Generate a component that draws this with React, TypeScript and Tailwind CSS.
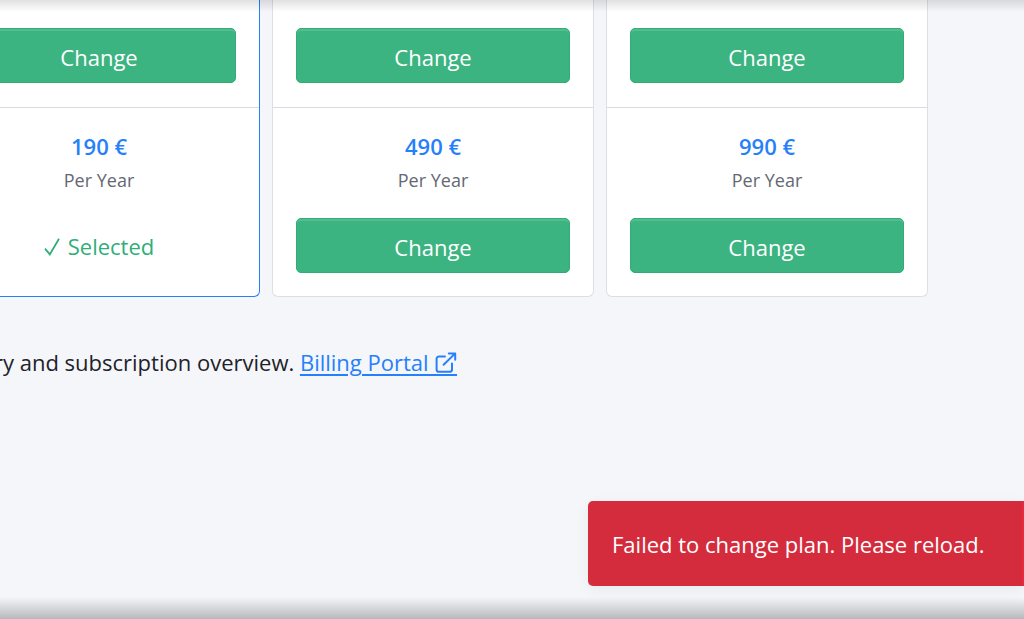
import React from 'react';

interface Plan {
  id: string;
  price: string;
  selected: boolean;
}

const PLANS: Plan[] = [
  { id: 'small', price: '190 €', selected: true },
  { id: 'medium', price: '490 €', selected: false },
  { id: 'large', price: '990 €', selected: false },
];

function ChangeButton() {
  return (
    <button
      type="button"
      className="flex h-[55px] w-full items-center justify-center rounded-[5px] border border-[#2fac77] bg-[#3cb481] pt-0.5 text-[22px] leading-8 text-white shadow-[inset_0_2px_0_rgba(255,255,255,0.12)]"
    >
      Change
    </button>
  );
}

// The last line continues the link's underline below the icon
function ExternalIcon() {
  return (
    <svg
      viewBox="0 0 24 24"
      className="inline-block h-6 w-6 align-[-5px]"
      fill="none"
      stroke="currentColor"
      strokeWidth="2"
      strokeLinecap="round"
      strokeLinejoin="round"
      aria-hidden="true"
    >
      <path d="M11 4.4H5a2.4 2.4 0 0 0-2.4 2.4v10.6A2.4 2.4 0 0 0 5 19.8h10.6a2.4 2.4 0 0 0 2.4-2.4V11.6" />
      <path d="M9.6 12.8 21 1.6M14.8 1.4h6.4v6.4" />
      <path d="M-1 23h24" strokeLinecap="butt" />
    </svg>
  );
}

function PlanCard({ plan }: { plan: Plan }) {
  const border = plan.selected ? 'border-[#2680fb]' : 'border-[#dcdfe5]';

  return (
    <section className={`rounded-b-md border border-t-0 bg-white text-center ${border}`}>
      {/* Monthly */}
      <div className="border-b border-[#d9dbe0] px-[23px] pt-7 pb-6">
        <ChangeButton />
      </div>

      {/* Yearly */}
      <div className="px-[23px] pt-[22px] pb-[23px]">
        <p className="text-[22px] leading-8 font-semibold text-[#2680fb]">{plan.price}</p>
        <p className="mt-0.5 text-[18px] leading-8 text-[#646873]">Per Year</p>
        <div className="mt-[22px] h-[55px]">
          {plan.selected ? (
            <p className="flex h-full items-center justify-center gap-2 pt-0.5 text-[22px] text-[#2fae79]">
              <svg viewBox="0 0 16 18" className="h-[18px] w-4" fill="none" stroke="currentColor" strokeWidth="1.8" aria-hidden="true">
                <path d="M1 10.6 5.8 16.4 15 .8" />
              </svg>
              Selected
            </p>
          ) : (
            <ChangeButton />
          )}
        </div>
      </div>
    </section>
  );
}

export default function App() {
  return (
    <div className="relative min-h-screen overflow-hidden bg-[#f4f6fa] font-['Open_Sans','Noto_Sans',sans-serif] text-[#1f2229]">
      <main>
        <div className="mr-24 -ml-[62px] grid grid-cols-3 gap-3">
          {PLANS.map((plan) => (
            <PlanCard key={plan.id} plan={plan} />
          ))}
        </div>

        <p className="mt-[47px] -ml-1.5 text-[22px] leading-9 whitespace-nowrap">
          ry and subscription overview.{' '}
          <a href="#billing" className="text-[#2680fb] underline decoration-2 underline-offset-3">
            Billing Portal <ExternalIcon />
          </a>
        </p>
      </main>

      {/* Edge shadows of the scrolling area */}
      <div className="pointer-events-none absolute inset-x-0 top-0 h-3 bg-linear-to-b from-black/12 to-transparent" />
      <div className="pointer-events-none absolute inset-x-0 bottom-0 h-[22px] bg-linear-to-t from-black/25 to-transparent" />

      {/* Toast */}
      <div
        role="alert"
        className="absolute right-0 bottom-[33px] flex h-[85px] w-[436px] items-center rounded-l-[5px] border-r-2 border-[#e8293b] bg-[#d42c3c] pt-0.5 pl-6 text-[22px] whitespace-nowrap text-white shadow-[0_4px_16px_rgba(0,0,0,0.05)]"
      >
        Failed to change plan. Please reload.
      </div>
    </div>
  );
}
